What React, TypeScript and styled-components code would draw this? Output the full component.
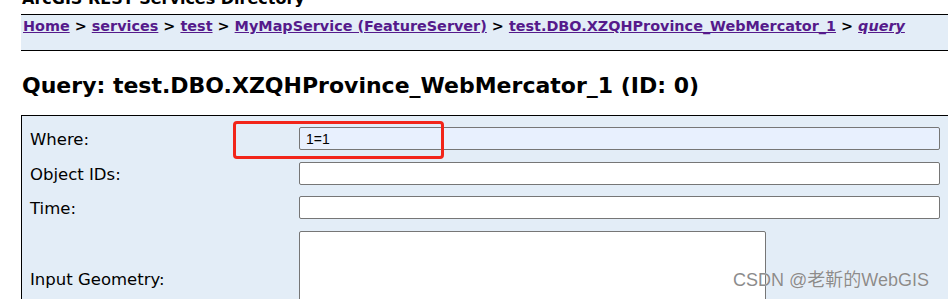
import styled, { createGlobalStyle } from 'styled-components'

const GlobalStyle = createGlobalStyle`
  html, body {
    margin: 0;
    padding: 0;
    background: #fff;
    overflow: hidden;
  }
  body {
    font-family: 'DejaVu Sans', Verdana, sans-serif;
    color: #000;
  }
`

const crumbs = [
  'Home',
  'services',
  'test',
  'MyMapService (FeatureServer)',
  'test.DBO.XZQHProvince_WebMercator_1'
]

const fields = ['Where:', 'Object IDs:', 'Time:']

export default function App() {
  return (
    <Page>
      <GlobalStyle />
      <SiteTitle>ArcGIS REST Services Directory</SiteTitle>

      <NavBar>
        {crumbs.map((c) => (
          <span key={c}>
            <CrumbLink href="#">{c}</CrumbLink>
            <Sep> &gt; </Sep>
          </span>
        ))}
        <CrumbLink href="#" $italic>
          query
        </CrumbLink>
      </NavBar>

      <Heading>Query: test.DBO.XZQHProvince_WebMercator_1 (ID: 0)</Heading>

      <FormTable>
        <Callout />
        {fields.map((label, i) => (
          <Row key={label}>
            <Label>{label}</Label>
            <Field>
              <TextInput
                defaultValue={i === 0 ? '1=1' : ''}
                $filled={i === 0}
              />
            </Field>
          </Row>
        ))}
        <Row>
          <Label>Input Geometry:</Label>
          <Field>
            <GeometryArea />
          </Field>
        </Row>
      </FormTable>

      <Watermark>CSDN @老靳的WebGIS</Watermark>
    </Page>
  )
}

const Page = styled.div`
  position: relative;
  width: 948px;
  height: 299px;
  overflow: hidden;
  padding-left: 21px;
  box-sizing: border-box;
`

const SiteTitle = styled.div`
  margin-top: -11px;
  height: 25px;
  line-height: 20px;
  padding-left: 1px;
  font-size: 16px;
  font-weight: bold;
  white-space: nowrap;
`

const NavBar = styled.div`
  width: 940px;
  border-top: 1px solid #000;
  border-bottom: 1px solid #000;
  background: #e3edf7;
  height: 37px;
  box-sizing: border-box;
  padding: 3px 2px 0;
  font-size: 14.4px;
  font-weight: bold;
  white-space: nowrap;
`

const CrumbLink = styled.a<{ $italic?: boolean }>`
  color: #551a8b;
  text-decoration: underline;
  font-style: ${(p) => (p.$italic ? 'italic' : 'normal')};
`

const Sep = styled.span`
  color: #000;
`

const Heading = styled.h2`
  margin: 0;
  padding: 22px 0 0 1px;
  height: 64px;
  box-sizing: border-box;
  font-size: 22px;
  font-weight: bold;
  white-space: nowrap;
`

const FormTable = styled.div`
  position: relative;
  width: 940px;
  border: 1px solid #000;
  border-bottom: none;
  background: #e3edf7;
  padding-top: 11px;
  display: flex;
  flex-direction: column;
  gap: 11.5px;
  height: 200px;
  box-sizing: border-box;
`

const Row = styled.div`
  display: grid;
  grid-template-columns: 277px 1fr;
  align-items: center;
`

const Label = styled.div`
  padding-left: 8px;
  padding-top: 2px;
  font-size: 16.5px;
`

const Field = styled.div`
  display: flex;
`

const TextInput = styled.input<{ $filled?: boolean }>`
  width: 641px;
  height: 23px;
  box-sizing: border-box;
  border: 1px solid #767676;
  border-radius: 2px;
  background: ${(p) => (p.$filled ? '#e8f0fe' : '#fff')};
  padding: 0 6px;
  font-family: 'Liberation Sans', Arial, sans-serif;
  font-size: 14px;
  color: #000;
  outline: none;
`

const GeometryArea = styled.textarea`
  width: 467px;
  height: 96px;
  box-sizing: border-box;
  border: 1px solid #767676;
  border-radius: 2px;
  background: #fff;
  resize: none;
  outline: none;
`

const Callout = styled.div`
  position: absolute;
  top: 5px;
  left: 211px;
  width: 211px;
  height: 38px;
  box-sizing: border-box;
  border: 3px solid #f22519;
  border-radius: 4px;
  pointer-events: none;
`

const Watermark = styled.div`
  position: absolute;
  left: 733px;
  top: 269px;
  line-height: 22px;
  font-family: 'Liberation Sans', 'Noto Sans CJK SC', sans-serif;
  font-size: 18px;
  color: #8c8c8c;
  text-shadow: 0 0 1px #fff;
  white-space: nowrap;
`
